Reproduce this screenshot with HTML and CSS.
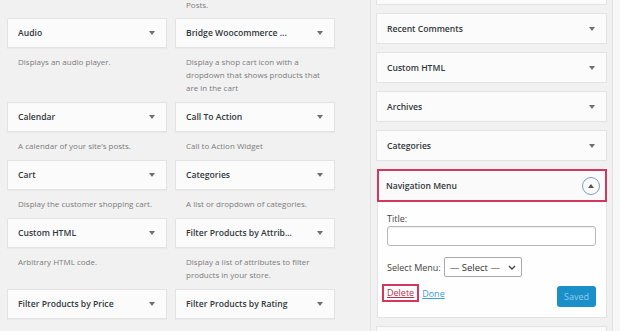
FILE: index.html
```html
<!DOCTYPE html>
<html lang="en">
<head>
    <title>Widgets</title>
    <link rel="stylesheet" href="styles.css">
</head>
<body>
  <div class="screen">

    <div class="widget-list">
      <div class="widget-cell"></div>
      <div class="widget-cell">
        <p class="widget-desc cut-desc">Posts.</p>
      </div>

      <div class="widget-cell">
        <div class="widget-top"><span>Audio</span><svg class="arrow" width="6" height="4" viewBox="0 0 6 4"><path d="M0 0h6L3 4z"/></svg></div>
        <p class="widget-desc">Displays an audio player.</p>
      </div>
      <div class="widget-cell">
        <div class="widget-top"><span>Bridge Woocommerce ...</span><svg class="arrow" width="6" height="4" viewBox="0 0 6 4"><path d="M0 0h6L3 4z"/></svg></div>
        <p class="widget-desc">Display a shop cart icon with a dropdown that shows products that are in the cart</p>
      </div>

      <div class="widget-cell">
        <div class="widget-top"><span>Calendar</span><svg class="arrow" width="6" height="4" viewBox="0 0 6 4"><path d="M0 0h6L3 4z"/></svg></div>
        <p class="widget-desc">A calendar of your site’s posts.</p>
      </div>
      <div class="widget-cell">
        <div class="widget-top"><span>Call To Action</span><svg class="arrow" width="6" height="4" viewBox="0 0 6 4"><path d="M0 0h6L3 4z"/></svg></div>
        <p class="widget-desc">Call to Action Widget</p>
      </div>

      <div class="widget-cell">
        <div class="widget-top"><span>Cart</span><svg class="arrow" width="6" height="4" viewBox="0 0 6 4"><path d="M0 0h6L3 4z"/></svg></div>
        <p class="widget-desc">Display the customer shopping cart.</p>
      </div>
      <div class="widget-cell">
        <div class="widget-top"><span>Categories</span><svg class="arrow" width="6" height="4" viewBox="0 0 6 4"><path d="M0 0h6L3 4z"/></svg></div>
        <p class="widget-desc">A list or dropdown of categories.</p>
      </div>

      <div class="widget-cell">
        <div class="widget-top"><span>Custom HTML</span><svg class="arrow" width="6" height="4" viewBox="0 0 6 4"><path d="M0 0h6L3 4z"/></svg></div>
        <p class="widget-desc">Arbitrary HTML code.</p>
      </div>
      <div class="widget-cell">
        <div class="widget-top"><span>Filter Products by Attrib...</span><svg class="arrow" width="6" height="4" viewBox="0 0 6 4"><path d="M0 0h6L3 4z"/></svg></div>
        <p class="widget-desc">Display a list of attributes to filter products in your store.</p>
      </div>

      <div class="widget-cell">
        <div class="widget-top"><span>Filter Products by Price</span><svg class="arrow" width="6" height="4" viewBox="0 0 6 4"><path d="M0 0h6L3 4z"/></svg></div>
      </div>
      <div class="widget-cell">
        <div class="widget-top"><span>Filter Products by Rating</span><svg class="arrow" width="6" height="4" viewBox="0 0 6 4"><path d="M0 0h6L3 4z"/></svg></div>
      </div>
    </div>

    <aside class="sidebar">
      <div class="sidebar-widget cut-widget"></div>
      <div class="sidebar-widget"><span>Recent Comments</span><svg class="arrow" width="6" height="4" viewBox="0 0 6 4"><path d="M0 0h6L3 4z"/></svg></div>
      <div class="sidebar-widget"><span>Custom HTML</span><svg class="arrow" width="6" height="4" viewBox="0 0 6 4"><path d="M0 0h6L3 4z"/></svg></div>
      <div class="sidebar-widget"><span>Archives</span><svg class="arrow" width="6" height="4" viewBox="0 0 6 4"><path d="M0 0h6L3 4z"/></svg></div>
      <div class="sidebar-widget"><span>Categories</span><svg class="arrow" width="6" height="4" viewBox="0 0 6 4"><path d="M0 0h6L3 4z"/></svg></div>

      <div class="nav-widget">
        <div class="nav-head">
          <span>Navigation Menu</span>
          <span class="toggle-circle">
            <svg width="6" height="4" viewBox="0 0 6 4"><path d="M0 4h6L3 0z"/></svg>
          </span>
        </div>
        <div class="nav-body">
          <label class="field-label">Title:</label>
          <div class="text-input"></div>
          <div class="select-row">
            <span>Select Menu:</span>
            <span class="select-box">— Select —
              <svg width="8" height="5" viewBox="0 0 8 5"><path d="M1 1l3 3 3-3" fill="none" stroke="#444" stroke-width="1.4"/></svg>
            </span>
          </div>
          <div class="actions">
            <div class="links">
              <a class="delete-link">Delete</a>
              <a class="done-link">Done</a>
            </div>
            <button class="saved-button">Saved</button>
          </div>
        </div>
      </div>

      <div class="sidebar-widget"></div>
    </aside>

  </div>
</body>
</html>
```

FILE: styles.css
```css
body {
  margin: 0;
  background-color: #f7f7f7;
  font-family: "Open Sans", Arial, sans-serif;
  color: #32373c;
}

.screen {
  display: flex;
  height: 331px;
  overflow: hidden;
  background-color: #f1f1f1;
  width: 613px;
}

.widget-list {
  display: grid;
  grid-template-columns: 160px 160px;
  column-gap: 8px;
  align-content: start;
  padding-left: 7px;
  margin-top: -2px;
}

.widget-top {
  height: 28px;
  border: 1px solid #e3e3e3;
  background-color: #fbfbfb;
  display: flex;
  align-items: center;
  justify-content: space-between;
  padding: 0 11px 0 10px;
  font-size: 8.6px;
  font-weight: 600;
  box-shadow: 0 1px 1px rgba(0, 0, 0, 0.03);
}

.arrow {
  fill: #6f6f6f;
}

.widget-desc {
  margin: 0;
  padding: 7px 8px 8px 11px;
  font-size: 8px;
  line-height: 13px;
  color: #7c7c7c;
}

.cut-desc {
  padding-top: 0;
  padding-bottom: 7px;
}

.sidebar {
  margin-left: 35px;
  width: 231px;
  padding: 0 5px;
  border-left: 1px solid #e2e2e2;
  border-right: 1px solid #e2e2e2;
  display: flex;
  flex-direction: column;
  gap: 8px;
}

.sidebar-widget {
  flex-shrink: 0;
  height: 29px;
  border: 1px solid #e3e3e3;
  background-color: #fbfbfb;
  display: flex;
  align-items: center;
  justify-content: space-between;
  padding: 0 11px 0 10px;
  font-size: 8.6px;
  font-weight: 600;
}

.cut-widget {
  margin-top: -26px;
}

.nav-widget {
  flex-shrink: 0;
  margin-left: 1px;
}

.nav-head {
  height: 29px;
  border: 2px solid #d4375e;
  background-color: #fafafa;
  display: flex;
  align-items: center;
  justify-content: space-between;
  padding: 0 5px 0 7px;
  font-size: 8.6px;
  font-weight: 600;
}

.toggle-circle {
  width: 16px;
  height: 16px;
  border: 1px solid #7f9fc2;
  border-radius: 50%;
  display: flex;
  align-items: center;
  justify-content: center;
  fill: #555;
}

.nav-body {
  border: 1px solid #e3e3e3;
  border-top: none;
  background-color: #fefefe;
  padding: 10px 10px 10px 9px;
  font-size: 9px;
  color: #444;
}

.field-label {
  display: block;
  line-height: 13px;
}

.text-input {
  margin-top: 1px;
  height: 18px;
  border: 1px solid #b9b9b9;
  border-radius: 3px;
  box-shadow: inset 0 1px 2px rgba(0, 0, 0, 0.07);
  background-color: white;
}

.select-row {
  margin-top: 11px;
  display: flex;
  align-items: center;
  gap: 3px;
}

.select-box {
  width: 66px;
  height: 18px;
  border: 1px solid #a9a9a9;
  border-radius: 2px;
  display: flex;
  align-items: center;
  justify-content: space-between;
  padding: 0 5px;
  font-size: 9.5px;
  color: #333;
  background-color: white;
}

.actions {
  margin-top: 7px;
  margin-left: -5px;
  display: flex;
  justify-content: space-between;
  align-items: flex-start;
}

.links {
  display: flex;
  align-items: center;
  gap: 3px;
}

.delete-link {
  border: 2px solid #d4375e;
  padding: 0 3px;
  height: 14px;
  line-height: 14px;
  color: #b8304a;
  text-decoration: underline;
}

.done-link {
  color: #3c9fd0;
  text-decoration: underline;
}

.saved-button {
  margin-top: 2px;
  width: 39px;
  height: 21px;
  border: none;
  border-radius: 3px;
  background-color: #1a8fc9;
  color: #8fcdec;
  font-family: "Open Sans", Arial, sans-serif;
  font-size: 9px;
  padding: 0;
}
```
